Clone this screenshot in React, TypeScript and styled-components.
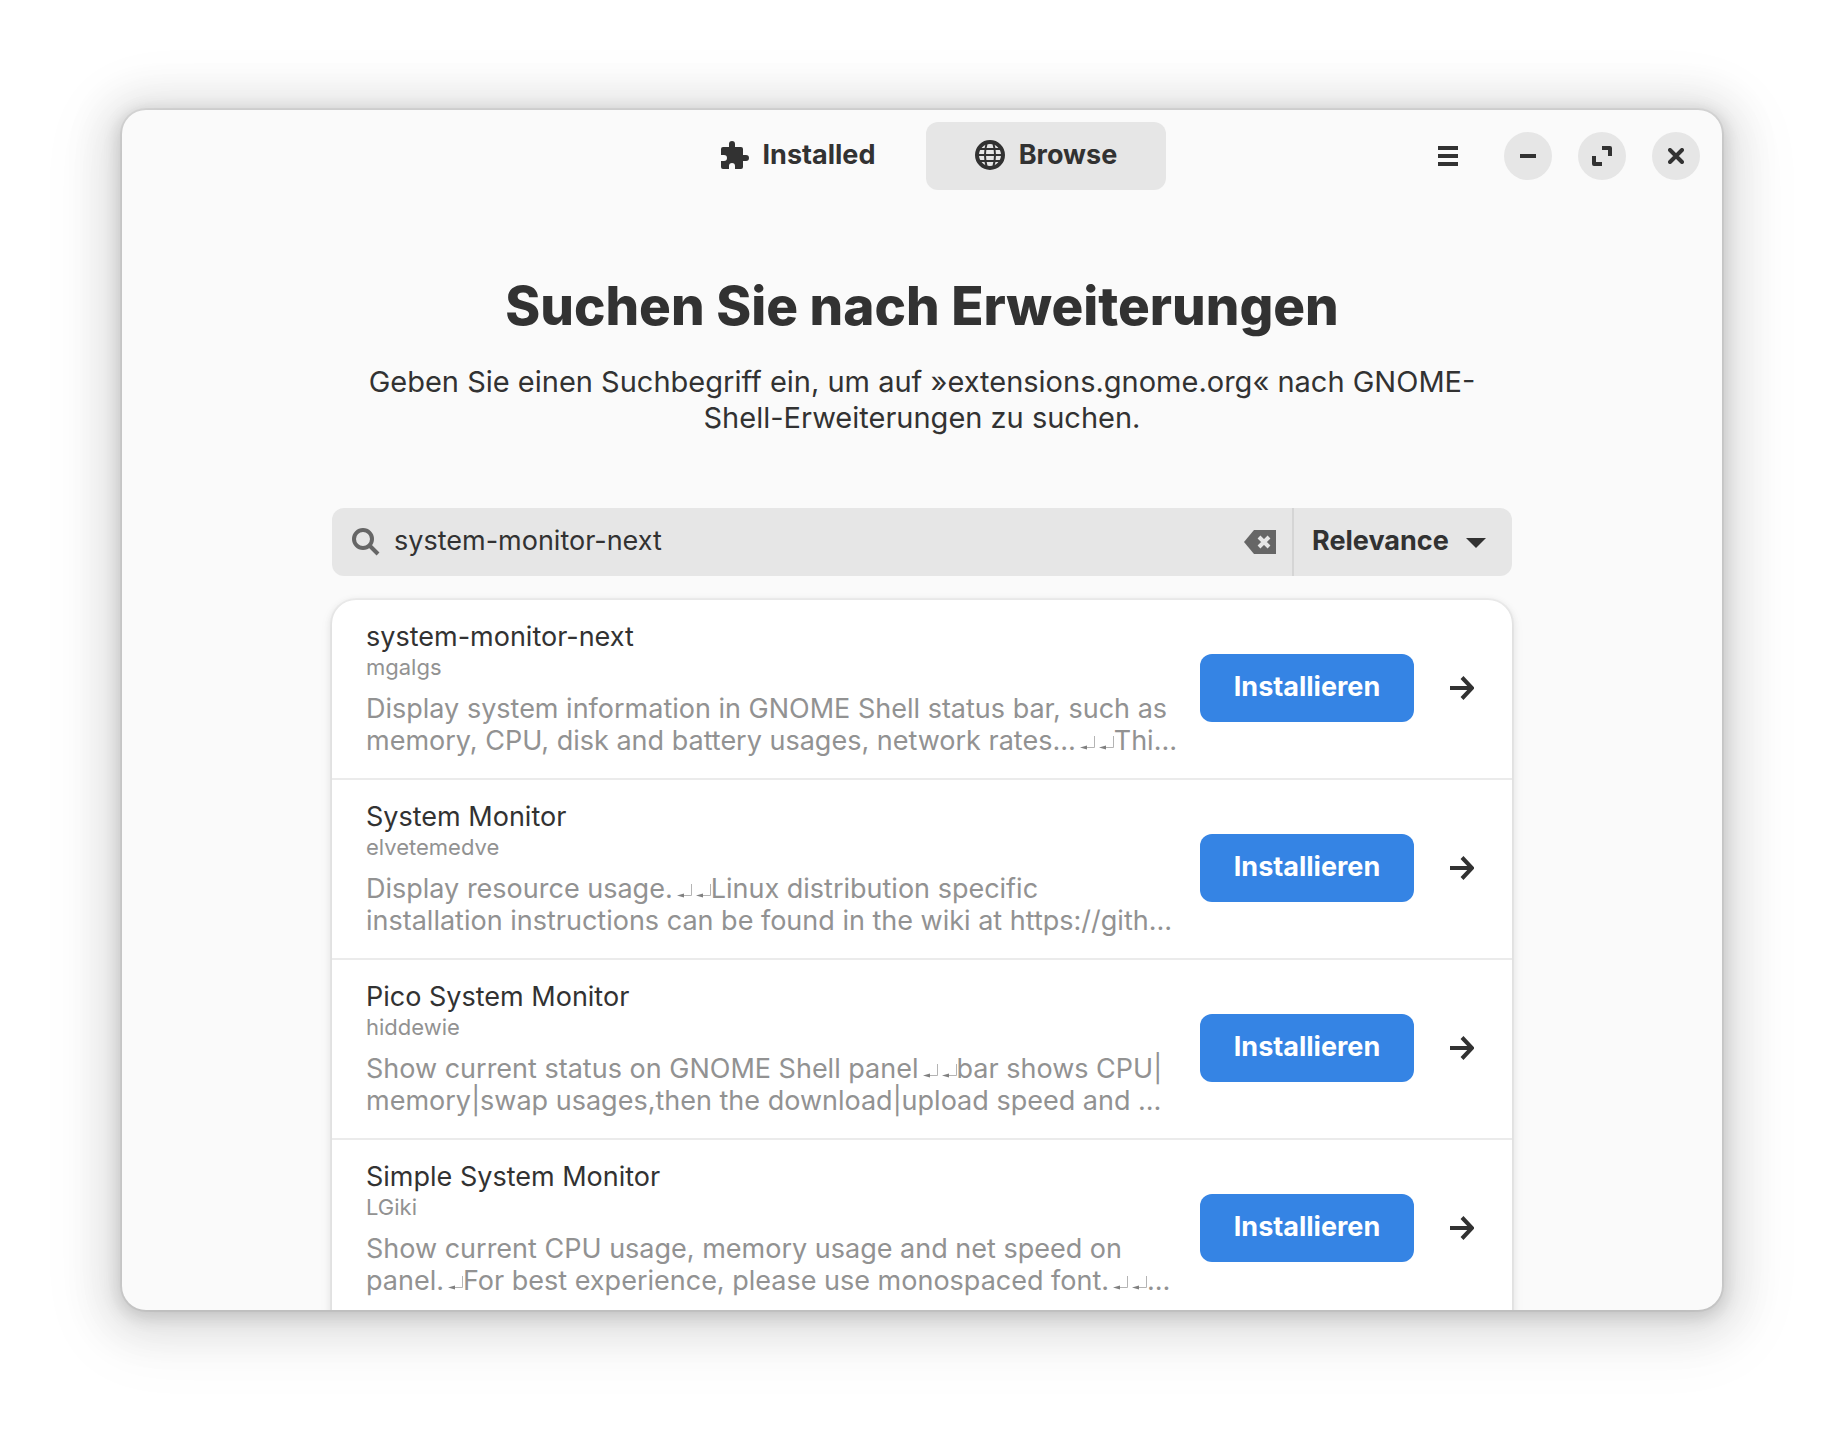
import React, { Fragment, useState } from "react";
import styled, { createGlobalStyle } from "styled-components";

const ink = "#323232";
const fill = "#e6e6e6";

const GlobalStyle = createGlobalStyle`
  *, *::before, *::after { box-sizing: border-box; }
  body {
    margin: 0;
    background: #ffffff;
    color: ${ink};
    font-family: Inter, "Liberation Sans", sans-serif;
    font-size: 27px;
    line-height: 32px;
  }
  button, input, select { font: inherit; color: inherit; border: 0; margin: 0; }
  button { cursor: pointer; }
`;

const Desktop = styled.div`
  display: flex;
  height: 100vh;
  padding: 110px 122px 134px;
`;

const AppWindow = styled.main`
  flex: 1;
  min-width: 0;
  display: flex;
  flex-direction: column;
  overflow: hidden;
  background: #fafafa;
  border-radius: 24px;
  box-shadow:
    0 0 0 2px rgba(0, 0, 0, 0.05),
    0 4px 16px 4px rgba(0, 0, 0, 0.13),
    0 6px 40px 20px rgba(0, 0, 0, 0.09),
    0 12px 64px 32px rgba(0, 0, 0, 0.04);
`;

const HeaderBar = styled.header`
  flex: none;
  display: grid;
  grid-template-columns: 1fr auto 1fr;
  align-items: center;
  height: 92px;
  padding: 0 22px;
`;

const Tabs = styled.nav`
  grid-column: 2;
  display: flex;
  gap: 8px;
`;

const Tab = styled.button<{ $active?: boolean }>`
  display: flex;
  align-items: center;
  justify-content: center;
  gap: 14px;
  width: 240px;
  height: 68px;
  padding: 0 0 2px;
  border-radius: 12px;
  background: ${(p) => (p.$active ? fill : "transparent")};
  font-weight: 700;
`;

const Controls = styled.div`
  display: flex;
  align-items: center;
  justify-content: flex-end;
  gap: 26px;
`;

const IconButton = styled.button`
  display: flex;
  align-items: center;
  justify-content: center;
  width: 68px;
  height: 68px;
  padding: 0;
  border-radius: 12px;
  background: transparent;
`;

const MenuButton = styled(IconButton)`
  margin-right: -4px;
`;

const WindowButton = styled(IconButton)`
  width: 48px;
  height: 48px;
  border-radius: 50%;
  background: ${fill};
`;

const Page = styled.div`
  flex: 1;
  min-height: 0;
  overflow: hidden;
  padding: 0 24px;
`;

const Clamp = styled.div`
  max-width: 1180px;
  margin: 0 auto;
`;

const Title = styled.h1`
  margin: 71px 0 25px;
  font-size: 53px;
  font-weight: 800;
  line-height: 66px;
  text-align: center;
`;

const Subtitle = styled.p`
  margin: 0 24px 72px;
  font-size: 29px;
  line-height: 36px;
  text-align: center;
`;

const SearchBar = styled.form`
  display: flex;
  height: 68px;
  margin-bottom: 24px;
  border-radius: 12px;
  background: ${fill};
`;

const SearchField = styled.label`
  flex: 1;
  min-width: 0;
  display: flex;
  align-items: center;
  gap: 14px;
  padding: 0 16px 0 20px;
`;

const SearchInput = styled.input`
  flex: 1;
  min-width: 0;
  padding: 0 0 2px;
  background: transparent;
  outline: none;
`;

const ClearButton = styled.button`
  display: flex;
  padding: 0;
  background: transparent;
`;

const Sort = styled.div`
  position: relative;
  display: flex;
  width: 220px;
  border-left: 2px solid #d5d5d5;
`;

const SortSelect = styled.select`
  appearance: none;
  width: 100%;
  padding: 0 18px 2px;
  background: transparent;
  font-weight: 700;
`;

const Caret = styled.svg`
  position: absolute;
  right: 26px;
  top: 30px;
  pointer-events: none;
`;

const Results = styled.ul`
  margin: 0;
  padding: 0;
  list-style: none;
  background: #ffffff;
  border-radius: 24px 24px 0 0;
  box-shadow:
    0 0 0 2px rgba(0, 0, 0, 0.03),
    0 2px 6px 2px rgba(0, 0, 0, 0.07),
    0 4px 12px 4px rgba(0, 0, 0, 0.03);
`;

const Row = styled.li`
  display: flex;
  align-items: center;
  gap: 14px;
  height: 180px;
  padding: 0 16px 2px 34px;
  border-bottom: 2px solid #ebebeb;
`;

const Info = styled.div`
  flex: 1;
  align-self: flex-start;
  min-width: 0;
  padding-top: 21px;
`;

const Name = styled.h2`
  margin: 0;
  font-size: 27px;
  font-weight: 400;
  line-height: 32px;
`;

const Author = styled.p`
  margin: 0 0 12px;
  color: #929292;
  font-size: 22px;
  line-height: 28px;
`;

const Description = styled.p`
  margin: 0;
  color: #929292;
  white-space: pre;
`;

const InstallButton = styled.button`
  width: 214px;
  height: 68px;
  padding: 0 0 2px;
  border-radius: 12px;
  background: #3584e4;
  color: #ffffff;
  font-weight: 700;
`;

// In the descriptions "\r" stands for a line break that is shown as a mark.
const extensions = [
  {
    name: "system-monitor-next",
    author: "mgalgs",
    text: "Display system information in GNOME Shell status bar, such as\nmemory, CPU, disk and battery usages, network rates…\r\rThi…",
  },
  {
    name: "System Monitor",
    author: "elvetemedve",
    text: "Display resource usage.\r\rLinux distribution specific\ninstallation instructions can be found in the wiki at https://gith…",
  },
  {
    name: "Pico System Monitor",
    author: "hiddewie",
    text: "Show current status on GNOME Shell panel\r\rbar shows CPU|\nmemory|swap usages,then the download|upload speed and …",
  },
  {
    name: "Simple System Monitor",
    author: "LGiki",
    text: "Show current CPU usage, memory usage and net speed on\npanel.\rFor best experience, please use monospaced font.\r\r…",
  },
];

const ReturnMark = () => (
  <svg width="19" height="14" viewBox="0 0 19 14" aria-hidden="true">
    <path d="M18.500 0v11.500H8" fill="none" stroke="#b4b4b4" />
    <path d="M4 11.500l7-2v4z" fill="#808080" />
  </svg>
);

const PuzzleIcon = () => (
  <svg width="28" height="28" viewBox="0 0 28 28" fill={ink} aria-hidden="true">
    <path d="M8 6V3a3 3 0 0 1 6 0v3h6a2 2 0 0 1 2 2v6h3a3 3 0 0 1 0 6h-3v6a2 2 0 0 1-2 2h-6v-3a3 3 0 0 0-6 0v3H2a2 2 0 0 1-2-2v-6h3a3 3 0 0 0 0-6H0V8a2 2 0 0 1 2-2z" />
  </svg>
);

const GlobeIcon = () => (
  <svg width="30" height="30" viewBox="0 0 30 30" fill="none" stroke={ink} aria-hidden="true">
    <circle cx="15" cy="15" r="13" strokeWidth="4" />
    <path d="M2 15h26M4 9h22M4 21h22" strokeWidth="2" />
    <path d="M12 2C9.500 10 9.500 20 12 28M18 2c2.500 8 2.500 18 0 26" strokeWidth="2" />
  </svg>
);

const SearchIcon = () => (
  <svg width="28" height="28" viewBox="0 0 28 28" fill="none" stroke="#666666" strokeWidth="4" aria-hidden="true">
    <circle cx="11" cy="11" r="9" />
    <path d="M17 17l9 9" />
  </svg>
);

const ClearIcon = () => (
  <svg width="32" height="24" viewBox="0 0 32 24" aria-hidden="true">
    <path d="M10 0h22v24H10L0 12z" fill="#666666" />
    <path d="M15 7l10 10M25 7L15 17" stroke={fill} strokeWidth="4" />
  </svg>
);

const ArrowIcon = () => (
  <svg width="24" height="24" viewBox="0 0 24 24" fill="none" stroke={ink} strokeWidth="4" aria-hidden="true">
    <path d="M0 12h21M12 1.500L22 12 12 22.500" />
  </svg>
);

function ExtensionText({ text }: { text: string }) {
  return (
    <Description>
      {text.split("\r").map((part, i) => (
        <Fragment key={i}>
          {i > 0 && <ReturnMark />}
          {part}
        </Fragment>
      ))}
    </Description>
  );
}

export default function App() {
  const [query, setQuery] = useState("system-monitor-next");
  return (
    <>
      <GlobalStyle />
      <Desktop>
        <AppWindow>
          <HeaderBar>
            <Tabs>
              <Tab type="button">
                <PuzzleIcon />
                Installed
              </Tab>
              <Tab type="button" $active>
                <GlobeIcon />
                Browse
              </Tab>
            </Tabs>
            <Controls>
              <MenuButton type="button" aria-label="Menu">
                <svg width="20" height="20" viewBox="0 0 20 20" fill={ink}>
                  <path d="M0 0h20v4H0zM0 8h20v4H0zM0 16h20v4H0z" />
                </svg>
              </MenuButton>
              <WindowButton type="button" aria-label="Minimize">
                <svg width="16" height="4" viewBox="0 0 16 4" fill={ink}>
                  <path d="M0 0h16v4H0z" />
                </svg>
              </WindowButton>
              <WindowButton type="button" aria-label="Maximize">
                <svg width="20" height="20" viewBox="0 0 20 20" fill={ink}>
                  <path d="M10 0h8a2 2 0 0 1 2 2v8h-4V4h-6zM0 10h4v6h6v4H2a2 2 0 0 1-2-2z" />
                </svg>
              </WindowButton>
              <WindowButton type="button" aria-label="Close">
                <svg width="16" height="16" viewBox="0 0 16 16" stroke={ink} strokeWidth="4" strokeLinecap="round">
                  <path d="M2 2l12 12M14 2L2 14" />
                </svg>
              </WindowButton>
            </Controls>
          </HeaderBar>
          <Page>
            <Clamp>
              <Title>Suchen Sie nach Erweiterungen</Title>
              <Subtitle>
                Geben Sie einen Suchbegriff ein, um auf »extensions.gnome.org« nach GNOME-Shell-Erweiterungen zu suchen.
              </Subtitle>
              <SearchBar onSubmit={(e) => e.preventDefault()}>
                <SearchField>
                  <SearchIcon />
                  <SearchInput aria-label="Search" value={query} onChange={(e) => setQuery(e.target.value)} />
                  <ClearButton type="button" aria-label="Clear" onClick={() => setQuery("")}>
                    <ClearIcon />
                  </ClearButton>
                </SearchField>
                <Sort>
                  <SortSelect aria-label="Sort by">
                    <option>Relevance</option>
                  </SortSelect>
                  <Caret width="20" height="10" viewBox="0 0 20 10" fill={ink} aria-hidden="true">
                    <path d="M0 0h20L10 10z" />
                  </Caret>
                </Sort>
              </SearchBar>
              <Results>
                {extensions.map((ext) => (
                  <Row key={ext.name}>
                    <Info>
                      <Name>{ext.name}</Name>
                      <Author>{ext.author}</Author>
                      <ExtensionText text={ext.text} />
                    </Info>
                    <InstallButton type="button">Installieren</InstallButton>
                    <IconButton type="button" aria-label="Details">
                      <ArrowIcon />
                    </IconButton>
                  </Row>
                ))}
              </Results>
            </Clamp>
          </Page>
        </AppWindow>
      </Desktop>
    </>
  );
}
